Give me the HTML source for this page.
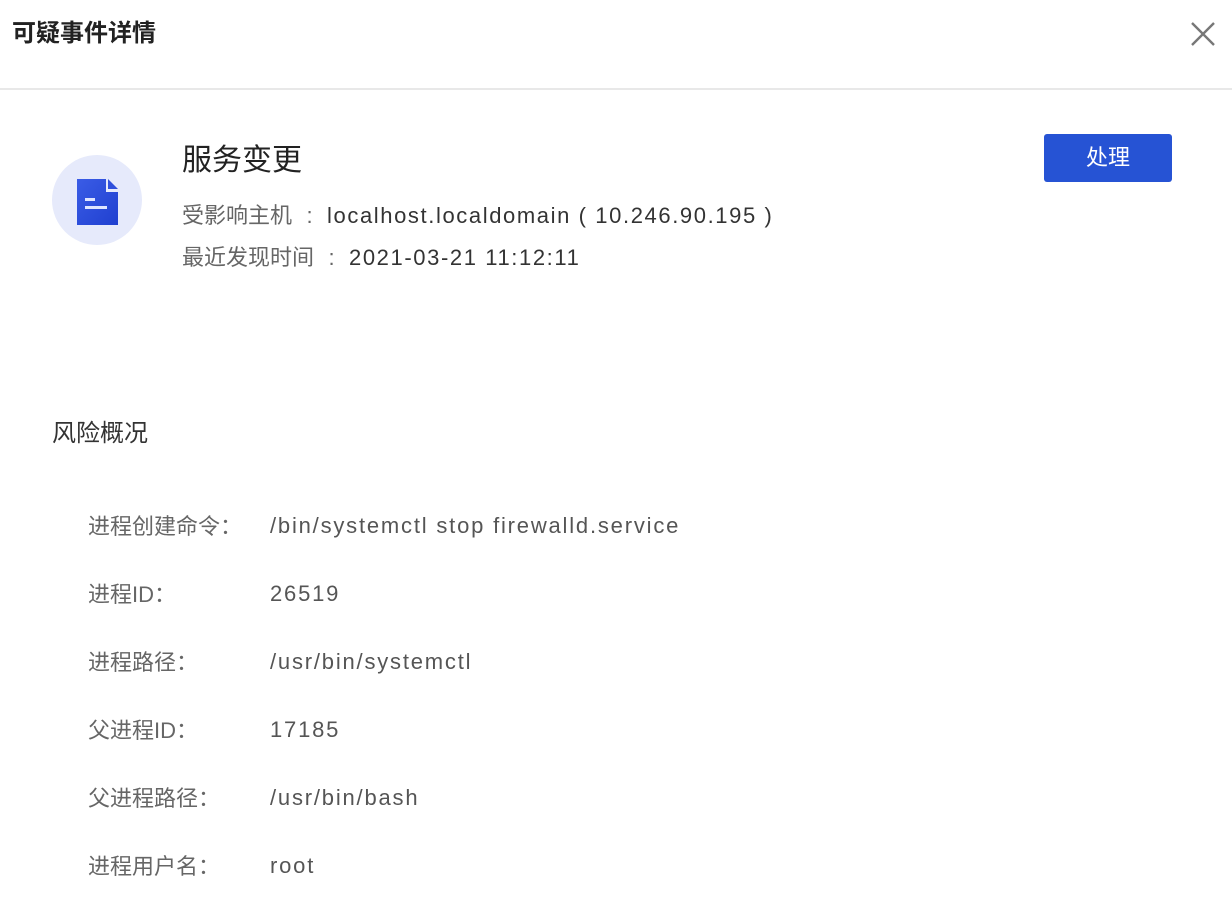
<!DOCTYPE html>
<html><head><meta charset="utf-8"><style>
body{margin:0;width:1232px;height:910px;background:#fff;font-family:"Liberation Sans","Noto Sans CJK SC",sans-serif;position:relative;overflow:hidden;color:#333}
.a{position:absolute;white-space:nowrap}
.lbl{color:#666;font-size:22px}
.val{color:#555;font-size:22px;letter-spacing:1.8px}
.c{display:inline-block;width:35px;text-align:center}
</style></head><body>
<div class="a" style="left:12px;top:13px;font-size:24px;font-weight:bold;color:#222">可疑事件详情</div>
<svg class="a" style="left:1190px;top:21px" width="26" height="26" viewBox="0 0 26 26"><path d="M2 2L24 24M24 2L2 24" stroke="#777" stroke-width="2.4"/></svg>
<div class="a" style="left:0;top:88px;width:1232px;height:2px;background:#e8e8e8"></div>
<div class="a" style="left:52px;top:155px;width:90px;height:90px;border-radius:50%;background:#e6eafb"></div>
<svg class="a" style="left:76px;top:178px" width="44" height="48" viewBox="0 0 44 48"><defs><linearGradient id="g" x1="0" y1="0" x2="1" y2="1"><stop offset="0" stop-color="#3a5ce6"/><stop offset="1" stop-color="#2040d0"/></linearGradient></defs><path d="M1 1H30V14H42V47H1Z" fill="url(#g)"/><path d="M32 1L42 11H32Z" fill="#3050dc"/><rect x="9" y="20" width="10" height="3" fill="#dfe5ff"/><rect x="9" y="28" width="22" height="3" fill="#dfe5ff"/></svg>
<div class="a" style="left:182px;top:135px;font-size:30px;color:#222">服务变更</div>
<div class="a" style="left:182px;top:198px;font-size:22px;color:#666">受影响主机<span class="c">:</span><span style="color:#333;letter-spacing:1.6px">localhost.localdomain ( 10.246.90.195 )</span></div>
<div class="a" style="left:182px;top:240px;font-size:22px;color:#666">最近发现时间<span class="c">:</span><span style="color:#333;letter-spacing:1.6px">2021-03-21 11:12:11</span></div>
<div class="a" style="left:1044px;top:134px;width:128px;height:48px;background:#2653d4;border-radius:3px;color:#fff;font-size:22px;line-height:48px;text-align:center">处理</div>
<div class="a" style="left:52px;top:413px;font-size:24px;color:#333">风险概况</div>
<div class="a lbl" style="left:88px;top:509px">进程创建命令：</div><div class="a val" style="left:270px;top:513px">/bin/systemctl stop firewalld.service</div>
<div class="a lbl" style="left:88px;top:577px">进程ID：</div><div class="a val" style="left:270px;top:581px">26519</div>
<div class="a lbl" style="left:88px;top:645px">进程路径：</div><div class="a val" style="left:270px;top:649px">/usr/bin/systemctl</div>
<div class="a lbl" style="left:88px;top:713px">父进程ID：</div><div class="a val" style="left:270px;top:717px">17185</div>
<div class="a lbl" style="left:88px;top:781px">父进程路径：</div><div class="a val" style="left:270px;top:785px">/usr/bin/bash</div>
<div class="a lbl" style="left:88px;top:849px">进程用户名：</div><div class="a val" style="left:270px;top:853px">root</div>
</body></html>
